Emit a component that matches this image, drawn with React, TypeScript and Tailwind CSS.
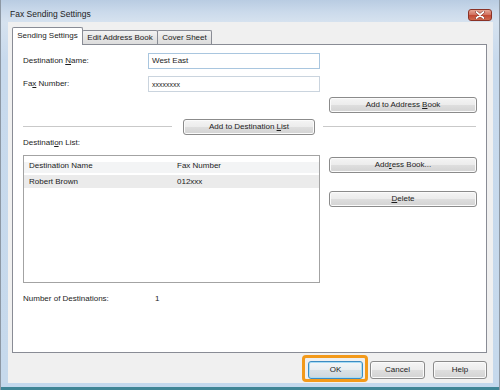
import React from 'react';

const ui = "font-['Liberation_Sans',Arial,sans-serif]";

type BtnProps = { children: React.ReactNode; className?: string };

// Windows 7 style push button
const Btn: React.FC<BtnProps> = ({ children, className = '' }) => (
  <div
    className={`flex items-center justify-center rounded-[3px] border border-[#8b8b8b] bg-[linear-gradient(#f5f5f5_0%,#ececec_48%,#dedede_52%,#d3d3d3_100%)] shadow-[inset_0_0_0_1px_#fbfbfb] text-[8px] leading-none text-[#1c1c1c] ${className}`}
  >
    <span>{children}</span>
  </div>
);

const U: React.FC<{ children: React.ReactNode }> = ({ children }) => (
  <span className="underline underline-offset-[1px]">{children}</span>
);

const CloseIcon = () => (
  <svg width="10" height="8" viewBox="0 0 10 8">
    <path d="M1.5 1 L8.5 7 M8.5 1 L1.5 7" stroke="#6b1f17" strokeWidth="2.6" strokeLinecap="round" />
    <path d="M1.5 1 L8.5 7 M8.5 1 L1.5 7" stroke="#ffffff" strokeWidth="1.7" strokeLinecap="round" />
  </svg>
);

const App: React.FC = () => {
  return (
    <div
      className={`w-[500px] h-[390px] flex flex-col overflow-hidden border-x border-[#8d98a4] bg-[linear-gradient(#b9cce2_0px,#cbdaeb_12px,#d6e2ef_22px,#c8daed_60px,#c6d9ec_100%)] ${ui}`}
    >
      {/* Title bar */}
      <div className="h-[22px] flex justify-between shrink-0">
        <div className="ml-[9px] mt-[9px] text-[8.5px] leading-[10px] text-[#1e1e1e]">Fax Sending Settings</div>
        <div className="mt-[9px] mr-[7px] w-[24px] h-[12px] rounded-[3px] border border-[#8a3226] bg-[linear-gradient(#e7a796_0%,#d37462_45%,#c24a35_55%,#cf6a4f_100%)] flex items-center justify-center">
          <CloseIcon />
        </div>
      </div>

      {/* Client area */}
      <div className="ml-[7px] mr-[6px] h-[361px] shrink-0 bg-[#f0f0f0] pl-[4px] pr-[6px] pt-[5px] flex flex-col">
        {/* Tabs */}
        <div className="h-[17px] flex items-end text-[8px] leading-none text-[#1c1c1c]">
          <div className="relative z-10 w-[71px] h-[18px] -mb-[1px] bg-white border-x border-t border-[#898c95] rounded-t-[2px] flex items-center justify-center pb-[2px]">
            Sending Settings
          </div>
          <div className="w-[76px] h-[14px] -ml-[1px] border-x border-t border-[#898c95] rounded-t-[2px] bg-[linear-gradient(#f3f3f3,#e6e6e6_50%,#dcdcdc)] flex items-center justify-center">
            Edit Address Book
          </div>
          <div className="w-[55px] h-[14px] -ml-[1px] border-x border-t border-[#898c95] rounded-t-[2px] bg-[linear-gradient(#f3f3f3,#e6e6e6_50%,#dcdcdc)] flex items-center justify-center">
            Cover Sheet
          </div>
        </div>

        {/* Tab panel */}
        <div className="h-[309px] bg-white border border-[#898c95] pl-[10px] pr-[9px] pt-[8px] flex flex-col text-[8px] leading-none text-[#1c1c1c]">
          <div className="h-[16px] flex items-center">
            <div className="w-[125px]">
              Destination <U>N</U>ame:
            </div>
            <div className="w-[172px] h-[16px] border border-[#a9c6df] flex items-center pl-[3px]">West East</div>
          </div>

          <div className="mt-[7px] h-[16px] flex items-center">
            <div className="w-[125px]">
              Fa<U>x</U> Number:
            </div>
            <div className="w-[172px] h-[16px] border border-[#cad4de] flex items-center pl-[3px] text-[7px]">xxxxxxxx</div>
          </div>

          <div className="mt-[5px] flex justify-end">
            <Btn className="w-[148px] h-[16px]">
              Add to Address <U>B</U>ook
            </Btn>
          </div>

          <div className="mt-[6px] h-[16px] flex items-center">
            <div className="w-[149px] h-[2px] border-t border-[#c9c9c9] border-b border-b-white" />
            <Btn className="ml-[11px] w-[132px] h-[16px]">
              Add to Destination <U>L</U>ist
            </Btn>
            <div className="ml-[8px] flex-1 mr-[1px] h-[2px] border-t border-[#c9c9c9] border-b border-b-white" />
          </div>

          <div className="mt-[2px] h-[12px] flex items-center">
            <span>
              Destinati<U>o</U>n List:
            </span>
          </div>

          <div className="mt-[6px] flex items-start">
            <div className="w-[297px] h-[128px] border border-[#a3a3a3] flex flex-col">
              <div className="h-[19px] flex items-center bg-[linear-gradient(#ffffff_0%,#ffffff_32%,#f3f4f5_33%,#f3f4f5_88%,#ffffff_89%)]">
                <div className="w-[153px] pl-[5px]">Destination Name</div>
                <div>Fax Number</div>
              </div>
              <div className="h-[13px] flex items-center bg-[#ebebeb]">
                <div className="w-[153px] pl-[5px]">Robert Brown</div>
                <div>012xxx</div>
              </div>
            </div>
            <div className="ml-[9px] flex flex-col">
              <Btn className="mt-[2px] w-[148px] h-[16px]">
                Add<U>r</U>ess Book...
              </Btn>
              <Btn className="mt-[18px] w-[148px] h-[16px]">
                <U>D</U>elete
              </Btn>
            </div>
          </div>

          <div className="mt-[10px] h-[12px] flex items-center">
            <div className="w-[132px]">Number of Destinations:</div>
            <div>1</div>
          </div>
        </div>

        {/* Dialog buttons */}
        <div className="mt-[8px] flex justify-end text-[8px]">
          <div className="relative">
            <div className="w-[55px] h-[18px] flex items-center justify-center rounded-[3px] border border-[#3c8cc2] bg-[linear-gradient(#f3f6f8_0%,#e9eef1_48%,#d9e1e6_52%,#cfd8de_100%)] shadow-[inset_0_0_0_1px_#a8dcf5] leading-none text-[#1c1c1c]">
              OK
            </div>
            <div className="absolute -left-[6px] -right-[5px] -top-[6px] -bottom-[3px] border-[3px] border-[#f39a1b] rounded-[4px]" />
          </div>
          <Btn className="ml-[7px] w-[55px] h-[18px]">Cancel</Btn>
          <Btn className="ml-[8px] w-[54px] h-[18px]">Help</Btn>
        </div>
      </div>

      {/* Bottom frame */}
      <div className="h-[4px] shrink-0 bg-[#c3d8ed]" />
      <div className="h-[3px] shrink-0 bg-[#3f8596] -mx-[1px]" />
    </div>
  );
};

export default App;
